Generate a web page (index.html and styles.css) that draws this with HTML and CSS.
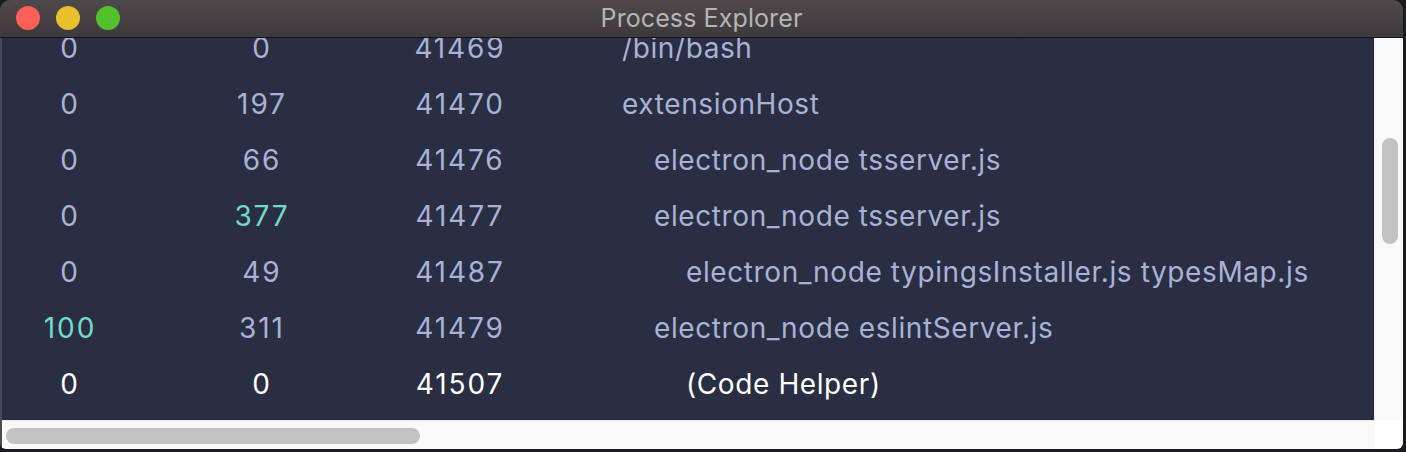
FILE: index.html
```html
<!DOCTYPE html>
<html>
<head>
<meta charset="utf-8">
<title>Process Explorer</title>
<link rel="stylesheet" href="styles.css">
</head>
<body>
<div class="window">
  <div class="titlebar">
    <div class="lights">
      <span class="light red"></span>
      <span class="light yellow"></span>
      <span class="light green"></span>
    </div>
    <div class="title">Process Explorer</div>
  </div>
  <div class="body">
    <div class="viewport">
      <div class="table">
        <div class="row"><span class="c1">0</span><span class="c2">0</span><span class="c3">41469</span><span class="name l0">/bin/bash</span></div>
        <div class="row"><span class="c1">0</span><span class="c2">197</span><span class="c3">41470</span><span class="name l0">extensionHost</span></div>
        <div class="row"><span class="c1">0</span><span class="c2">66</span><span class="c3">41476</span><span class="name l1">electron_node tsserver.js</span></div>
        <div class="row"><span class="c1">0</span><span class="c2 hot">377</span><span class="c3">41477</span><span class="name l1">electron_node tsserver.js</span></div>
        <div class="row"><span class="c1">0</span><span class="c2">49</span><span class="c3">41487</span><span class="name l2">electron_node typingsInstaller.js typesMap.js</span></div>
        <div class="row"><span class="c1 hot">100</span><span class="c2">311</span><span class="c3">41479</span><span class="name l1">electron_node eslintServer.js</span></div>
        <div class="row selected"><span class="c1">0</span><span class="c2">0</span><span class="c3">41507</span><span class="name l2">(Code Helper)</span></div>
      </div>
    </div>
    <div class="vscroll"><div class="vthumb"></div></div>
    <div class="hscroll"><div class="hthumb"></div></div>
    <div class="corner"></div>
  </div>
</div>
</body>
</html>
```

FILE: styles.css
```css
* { box-sizing: border-box; }
html, body {
  margin: 0;
  padding: 0;
  background: #1b1b1d;
  width: 1406px;
  height: 452px;
  overflow: hidden;
  font-family: Inter, "Noto Sans", "Liberation Sans", sans-serif;
}
.window {
  width: 1403px;
  height: 449px;
  border-radius: 10px 10px 6px 6px;
  overflow: hidden;
  display: flex;
  flex-direction: column;
  background: #292e42;
}
.titlebar {
  height: 38px;
  flex: none;
  background: linear-gradient(#4e494b, #3d393c);
  border-bottom: 1px solid #141316;
  display: flex;
  align-items: center;
  position: relative;
}
.lights {
  display: flex;
  gap: 16px;
  padding-left: 16px;
  padding-bottom: 2px;
}
.light {
  width: 24px;
  height: 24px;
  border-radius: 50%;
  display: block;
}
.red { background: #fe5f57; }
.yellow { background: #e8c02c; }
.green { background: #52c12b; }
.title {
  position: absolute;
  left: 0;
  right: 0;
  top: 0;
  bottom: 2px;
  display: flex;
  align-items: center;
  justify-content: center;
  color: #b7b3b5;
  font-size: 25px;
  letter-spacing: 0.1px;
}
.body {
  flex: 1;
  display: grid;
  grid-template-columns: 1372px 29px;
  grid-template-rows: 382px 29px;
  border-left: 2px solid #4b4b58;
  min-height: 0;
}
.viewport {
  overflow: hidden;
  background: #292e42;
}
.table {
  margin-top: -18px;
}
.row {
  display: grid;
  grid-template-columns: 134px 250px 146px 1fr;
  height: 56px;
  line-height: 56px;
  font-size: 28px;
  color: #a9b1d6;
  white-space: nowrap;
}
.row > span { display: block; }
.c1, .c2, .c3 {
  text-align: center;
  letter-spacing: 1.9px;
  padding-left: 2px;
}
.name {
  padding-left: 90px;
  letter-spacing: 0.6px;
}
.name.l1 { padding-left: 122px; }
.name.l2 { padding-left: 154px; }
.hot { color: #73daca; }
.row.selected { color: #ffffff; }
.vscroll {
  background: #f9f9f9;
  border-left: 1px solid #ececec;
  padding: 100px 0 0 7px;
}
.vthumb {
  width: 16px;
  height: 106px;
  border-radius: 8px;
  background: #c2c2c2;
}
.hscroll {
  background: #f9f9f9;
  border-top: 1px solid #e8e8e8;
  padding: 7px 0 0 4px;
}
.hthumb {
  width: 414px;
  height: 16px;
  border-radius: 8px;
  background: #c2c2c2;
}
.corner {
  background: #ffffff;
}
```
